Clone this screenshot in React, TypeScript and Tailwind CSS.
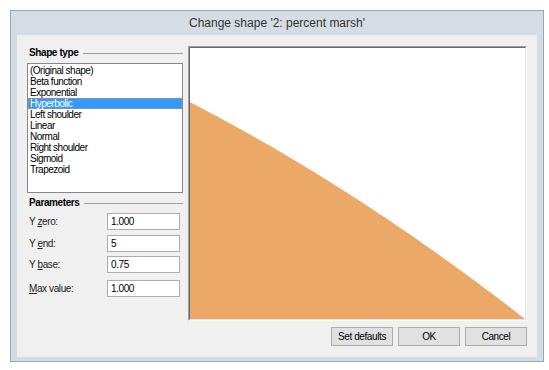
import React from "react";

const shapes = [
  "(Original shape)",
  "Beta function",
  "Exponential",
  "Hyperbolic",
  "Left shoulder",
  "Linear",
  "Normal",
  "Right shoulder",
  "Sigmoid",
  "Trapezoid",
];

// curve of the hyperbolic shape, fitted to the preview
function curvePath(w: number, h: number) {
  const pts: string[] = [];
  for (let i = 0; i <= 60; i++) {
    const x = i / 60;
    const y = 0.2 + 0.636 * x + 0.164 * x * x;
    pts.push(`${(x * w).toFixed(2)},${(Math.min(y, 1) * h).toFixed(2)}`);
  }
  return `M0,${h} L${pts.join(" L")} L${w},${h} Z`;
}

function GroupHeader({ title }: { title: string }) {
  return (
    <div className="flex items-center h-[12px] pl-[2px]">
      <span className="font-bold text-[10px] tracking-[-0.4px] text-black leading-none">{title}</span>
      <div className="flex-1 h-px bg-[#a0a0a0] ml-[5px]" />
    </div>
  );
}

function ParamRow({ pre, key1, post, value, mt }: { pre: string; key1: string; post: string; value: string; mt: string }) {
  return (
    <div className={`flex items-center h-[17px] ${mt}`}>
      <span className="w-[80px] pl-[2px] text-[10px] tracking-[-0.4px] text-[#222]">
        {pre}
        <span className="underline">{key1}</span>
        {post}
      </span>
      <div className="w-[73px] h-[17px] border border-[#abadb3] bg-white flex items-center pl-[3px] text-[10px] tracking-[-0.4px] text-black">
        {value}
      </div>
    </div>
  );
}

function Btn({ label }: { label: string }) {
  return (
    <button className="w-[62px] h-[19px] border border-[#adadad] bg-[#e1e1e1] text-[10px] tracking-[-0.4px] text-black flex items-center justify-center">
      {label}
    </button>
  );
}

export default function App() {
  return (
    <div className="w-[549px] h-[370px] bg-white pt-[10px] pl-[10px]" style={{ fontFamily: '"Liberation Sans", Arial, sans-serif' }}>
      <div className="w-[534px] h-[352px] border border-[#9ba3ac] bg-[#d6dce4] flex flex-col px-[6px] pb-[4px]">
        {/* Title bar */}
        <div className="h-[24px] flex items-center justify-center text-[12px] text-[#333]">
          Change shape '2: percent marsh'
        </div>

        {/* Client area */}
        <div className="flex-1 bg-[#f0f0f0] flex pl-[10px] pr-[10px] pt-[11px]">
          {/* Left column */}
          <div className="w-[156px] flex flex-col pt-[1px]">
            <GroupHeader title="Shape type" />
            <div className="mt-[4px] h-[130px] border border-[#828790] bg-white flex flex-col pt-[1px]">
              {shapes.map((s) =>
                s === "Hyperbolic" ? (
                  <div key={s} className="h-[11px] bg-[#3399ff] border border-dotted border-[#e58a2f] flex items-center pl-[1px] text-[10px] tracking-[-0.5px] text-white leading-none">
                    {s}
                  </div>
                ) : (
                  <div key={s} className="h-[11px] flex items-center pl-[2px] text-[10px] tracking-[-0.5px] text-black leading-none">
                    {s}
                  </div>
                )
              )}
            </div>

            <div className="mt-[4px]">
              <GroupHeader title="Parameters" />
            </div>
            <ParamRow pre="Y " key1="z" post="ero:" value="1.000" mt="mt-[4px]" />
            <ParamRow pre="Y " key1="e" post="nd:" value="5" mt="mt-[5px]" />
            <ParamRow pre="Y " key1="b" post="ase:" value="0.75" mt="mt-[4px]" />
            <ParamRow pre="" key1="M" post="ax value:" value="1.000" mt="mt-[7px]" />
          </div>

          {/* Right column */}
          <div className="ml-[5px] flex-1 flex flex-col">
            <div className="h-[275px] border-t border-l border-[#a0a0a0] border-r border-b border-r-white border-b-white">
              <div className="w-full h-full border-t border-l border-[#696969] border-r border-b border-r-[#e3e3e3] border-b-[#e3e3e3] bg-white">
                <svg width="100%" height="100%" viewBox="0 0 335 271" preserveAspectRatio="none" className="block">
                  <path d={curvePath(335, 271)} fill="#eba867" />
                </svg>
              </div>
            </div>
            <div className="mt-[6px] flex justify-end gap-[5px]">
              <Btn label="Set defaults" />
              <Btn label="OK" />
              <Btn label="Cancel" />
            </div>
          </div>
        </div>
      </div>
    </div>
  );
}
